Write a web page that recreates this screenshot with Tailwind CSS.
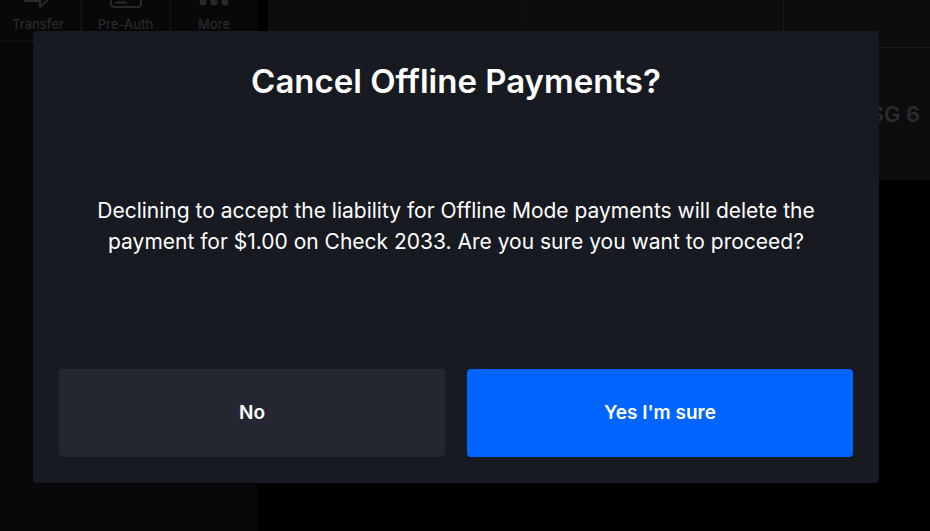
<!DOCTYPE html>
<html lang="en">
<head>
    <meta charset="UTF-8">
    <meta name="viewport" content="width=device-width, initial-scale=1.0">
    <title>Cancel Offline Payments</title>
    <script src="https://cdn.jsdelivr.net/npm/@tailwindcss/browser@4"></script>
</head>
<body class="bg-black font-['Inter',sans-serif] text-white">

    <!-- Order screen behind the dialog -->
    <div class="flex h-screen gap-[11px] overflow-hidden" inert>
        <aside class="w-[257px] shrink-0 bg-[#08080a]">
            <nav class="grid h-[42px] grid-cols-[82px_89px_86px] grid-rows-[40px] border-b-2 border-[#101012] text-[13px] font-medium leading-4 text-[#29292a]">
                <button class="flex h-10 flex-col items-center justify-end gap-2 border-r-2 border-[#101012] pb-2 pr-1">
                    <svg class="h-6 w-7 shrink-0" viewBox="0 0 28 24" fill="none" stroke="currentColor" stroke-width="2" stroke-linejoin="round" aria-hidden="true">
                        <path d="M1 10v7h15v6l11-9.500l-11-9.500v6z"/>
                    </svg>
                    Transfer
                </button>
                <button class="flex h-10 flex-col items-center justify-end gap-2 border-r-2 border-[#101012] pb-2">
                    <svg class="h-6 w-8 shrink-0" viewBox="0 0 32 24" fill="none" stroke="currentColor" stroke-width="2" stroke-linecap="round" aria-hidden="true">
                        <rect x="1" y="2" width="30" height="21" rx="3"/>
                        <path d="M1 9h30M6 18.500h10"/>
                    </svg>
                    Pre-Auth
                </button>
                <button class="flex h-10 flex-col items-center justify-end gap-2 pb-2">
                    <svg class="h-6 w-8 shrink-0" viewBox="0 0 32 24" fill="currentColor" aria-hidden="true">
                        <circle cx="5" cy="18" r="3.500"/>
                        <circle cx="16" cy="18" r="3.500"/>
                        <circle cx="27" cy="18" r="3.500"/>
                    </svg>
                    More
                </button>
            </nav>
        </aside>

        <main class="grid h-[180px] flex-1 grid-cols-[259px_257px_1fr] grid-rows-[48px_1fr] bg-[#0c0d0e] text-[22px] font-semibold text-[#2b2b2c]">
            <div class="border-b border-r border-[#101112]"></div>
            <div class="border-b border-r border-[#18191a]"></div>
            <div class="border-b border-[#18191a]"></div>
            <div class="border-r border-[#101112]"></div>
            <div class="border-r border-[#18191a]"></div>
            <div class="flex items-center justify-end pr-[10px]">MSG 6</div>
        </main>
    </div>

    <!-- Confirm dialog -->
    <div class="fixed inset-0 pb-12 pl-[33px] pr-[51px] pt-[31px]">
        <div role="dialog" aria-modal="true" aria-labelledby="dialogTitle" class="flex min-h-full flex-col rounded bg-[#171a21] px-[26px] pb-[26px] pt-[30px] text-center">
            <h1 id="dialogTitle" class="text-[33px] font-semibold leading-10">Cancel Offline Payments?</h1>
            <p class="mx-auto mt-[94px] max-w-[740px] text-[21px] leading-[31px]">Declining to accept the liability for Offline Mode payments will delete the payment for $1.00 on Check 2033. Are you sure you want to proceed?</p>
            <div class="mt-auto grid grid-cols-2 gap-[22px] text-[19px] font-semibold">
                <button class="h-[88px] rounded bg-[#242731]">No</button>
                <button class="h-[88px] rounded bg-[#0064fe]">Yes I'm sure</button>
            </div>
        </div>
    </div>

</body>
</html>
